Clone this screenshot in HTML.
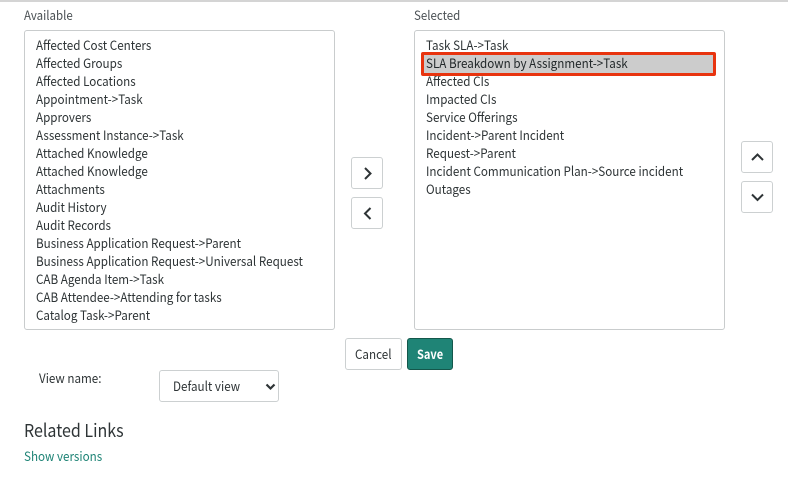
<!DOCTYPE html>
<html><head><meta charset="utf-8">
<style>
html,body{margin:0;padding:0;background:#fff;width:788px;height:501px;overflow:hidden}
body{position:relative;font-family:"Noto Sans CJK SC","Liberation Sans",sans-serif;font-size:13px;color:#2e3436}
.a{position:absolute;white-space:nowrap}
.s{display:inline-block;transform:scaleX(.896);transform-origin:0 50%}
.top{left:0;top:0;width:788px;height:2px;background:#d4d4d4}
.lbl{font-size:12.500px;line-height:18px;color:#4a5054;transform:scaleX(.92);transform-origin:0 50%}
.box{position:absolute;box-sizing:border-box;border:1px solid #c9cccd;border-radius:3px;background:#fff;overflow:hidden}
.box div{position:absolute;left:11px;white-space:nowrap;line-height:18px;height:18px;transform:scaleX(.896);transform-origin:0 50%}
.btn{position:absolute;box-sizing:border-box;width:32px;height:32px;border:1px solid #ccd0d1;border-radius:3px;background:#fff}
.btn svg{position:absolute;left:0;top:0}
</style></head><body>
<div class="a top"></div>
<div class="a lbl" style="left:24px;top:6px">Available</div>
<div class="a lbl" style="left:414px;top:6px">Selected</div>
<div class="box" style="left:24px;top:30px;width:311px;height:300px">
<div style="top:5px">Affected Cost Centers</div>
<div style="top:23px">Affected Groups</div>
<div style="top:41px">Affected Locations</div>
<div style="top:59px">Appointment-&gt;Task</div>
<div style="top:77px">Approvers</div>
<div style="top:95px">Assessment Instance-&gt;Task</div>
<div style="top:113px">Attached Knowledge</div>
<div style="top:131px">Attached Knowledge</div>
<div style="top:149px">Attachments</div>
<div style="top:167px">Audit History</div>
<div style="top:185px">Audit Records</div>
<div style="top:203px">Business Application Request-&gt;Parent</div>
<div style="top:221px">Business Application Request-&gt;Universal Request</div>
<div style="top:239px">CAB Agenda Item-&gt;Task</div>
<div style="top:257px">CAB Attendee-&gt;Attending for tasks</div>
<div style="top:275px">Catalog Task-&gt;Parent</div>
<div style="top:295px;color:#aaa">Catalog Task-&gt;Request</div>
</div>
<div class="box" style="left:414px;top:30px;width:311px;height:300px">
<div style="top:5px">Task SLA-&gt;Task</div>
<div style="top:41px">Affected CIs</div>
<div style="top:59px">Impacted CIs</div>
<div style="top:77px">Service Offerings</div>
<div style="top:95px">Incident-&gt;Parent Incident</div>
<div style="top:113px">Request-&gt;Parent</div>
<div style="top:131px">Incident Communication Plan-&gt;Source incident</div>
<div style="top:149px">Outages</div>
</div>
<div class="a" style="left:421px;top:52px;width:295px;height:24px;box-sizing:border-box;border:3px solid #e8340f;border-radius:2px;background:#cccccc;line-height:16px;padding-left:2px;color:#22282a"><span class="s">SLA Breakdown by Assignment-&gt;Task</span></div>
<div class="btn" style="left:351px;top:157px"><svg width="30" height="30" fill="none" stroke="#2e3436" stroke-width="2"><path d="M13 10l5.500 5.500-5.500 5.500"/></svg></div>
<div class="btn" style="left:351px;top:197px"><svg width="30" height="30" fill="none" stroke="#2e3436" stroke-width="2"><path d="M18.500 10l-5.500 5.500 5.500 5.500"/></svg></div>
<div class="btn" style="left:741px;top:141px"><svg width="30" height="30" fill="none" stroke="#2e3436" stroke-width="2"><path d="M10 18l5.500-5.500 5.500 5.500"/></svg></div>
<div class="btn" style="left:741px;top:181px"><svg width="30" height="30" fill="none" stroke="#2e3436" stroke-width="2"><path d="M10 12.500l5.500 5.500 5.500-5.500"/></svg></div>
<div class="a" style="left:345px;top:338px;width:57px;height:32px;box-sizing:border-box;border:1px solid #ccd0d1;border-radius:3px;padding-left:9px;line-height:29px"><span class="s">Cancel</span></div>
<div class="a" style="left:407px;top:338px;width:46px;height:32px;box-sizing:border-box;border:1px solid #14574b;border-radius:3px;background:#1f8476;color:#fff;font-weight:700;padding-left:9px;line-height:29px"><span class="s" style="transform:scaleX(.85)">Save</span></div>
<div class="a" style="left:39px;top:369px;line-height:18px"><span class="s">View name:</span></div>
<div class="a" style="left:159px;top:370px;width:120px;height:32px;box-sizing:border-box;border:1px solid #ccd0d1;border-radius:3px;line-height:30px;padding-left:13px"><span class="s">Default view</span><svg style="position:absolute;left:105px;top:12px" width="12" height="8" fill="none" stroke="#2e3436" stroke-width="2.200"><path d="M1.500 1.500L5.500 5.500l4-4"/></svg></div>
<div class="a" style="left:24px;top:419px;font-size:18px;line-height:22px;color:#2e3436"><span class="s" style="transform:scaleX(.89)">Related Links</span></div>
<div class="a" style="left:24px;top:447px;line-height:18px;color:#1f8476"><span class="s">Show versions</span></div>
</body></html>
